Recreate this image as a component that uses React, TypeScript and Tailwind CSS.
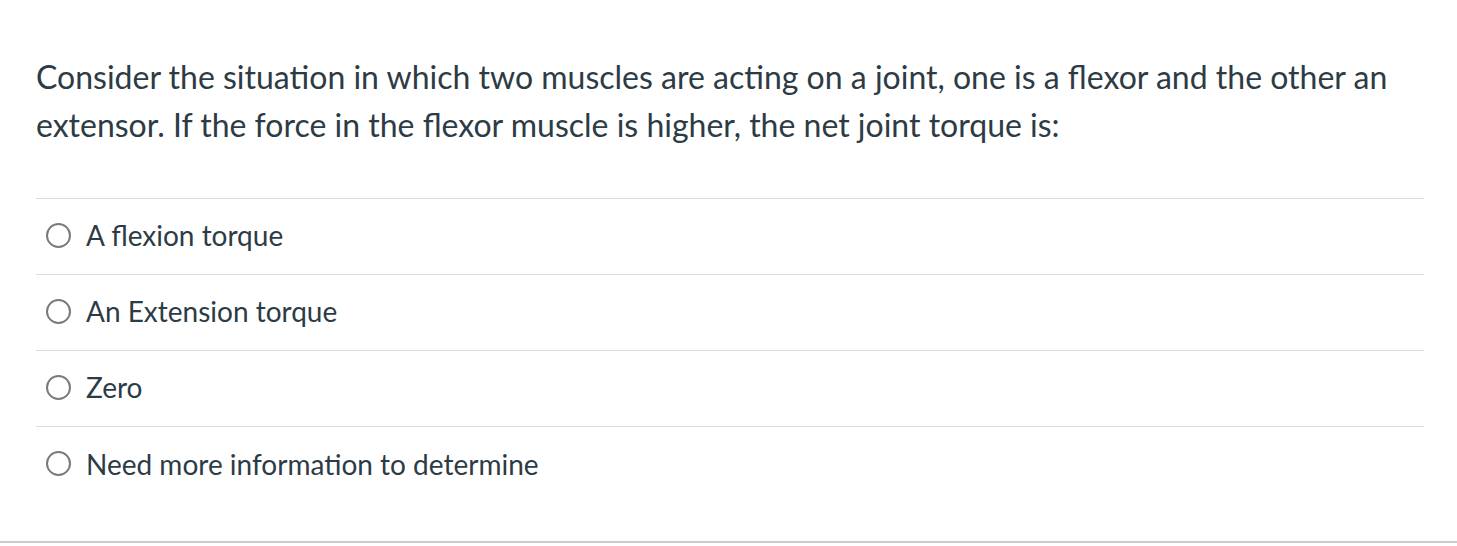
const options = [
  'A flexion torque',
  'An Extension torque',
  'Zero',
  'Need more information to determine',
]

const App = () => {
  return (
    <div className="h-[546px] w-[1457px] bg-white font-['Lato',sans-serif] text-[#2d3b45]">
      <div className="flex h-[543px] flex-col border-b-2 border-[#c7cdd1] pl-[36px] pr-[33px] pt-[53px]">
        <p className="text-[32px] leading-[48px]">
          Consider the situation in which two muscles are acting on a joint, one is a flexor and the other an
          extensor. If the force in the flexor muscle is higher, the net joint torque is:
        </p>
        <div className="mt-[49px] border-t border-[#dcdcdc]">
          {options.map((opt, i) => (
            <label
              key={opt}
              className={`flex h-[76px] items-center gap-[15px] pb-[3px] pl-[10px] ${i < options.length - 1 ? 'border-b border-[#dcdcdc]' : ''}`}
            >
              <span className="h-[25px] w-[25px] shrink-0 rounded-full border-2 border-[#7a7a7a] bg-white" />
              <span className="text-[28px] leading-none">{opt}</span>
            </label>
          ))}
        </div>
      </div>
    </div>
  )
}

export default App
